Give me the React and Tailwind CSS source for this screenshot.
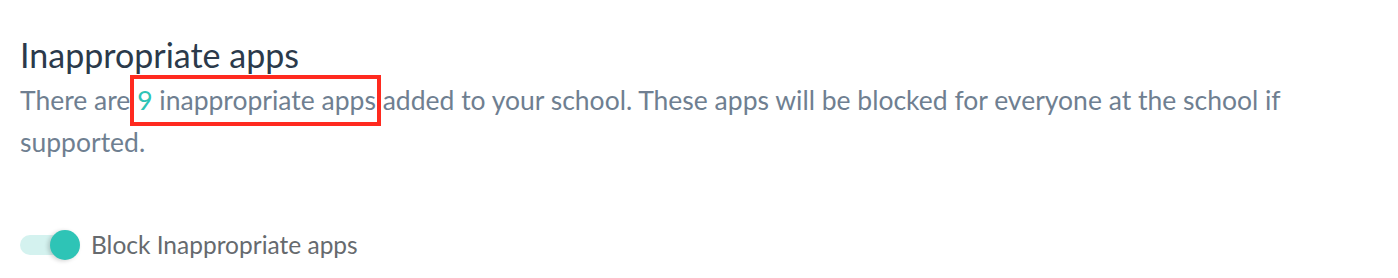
import React from "react";

export default function App() {
  return (
    <div
      className="w-full h-[278px] bg-white px-5 pt-[33px]"
      style={{ fontFamily: "Lato, 'Noto Sans', sans-serif" }}
    >
      <h2 className="text-[34px] leading-[44px] text-[#2b3a4b] font-normal">
        Inappropriate apps
      </h2>
      <p className="mt-[2px] text-[26.5px] leading-[42px] text-[#6f7f91] pr-[80px]">
        There are{" "}
        <span className="relative">
          <span className="text-[#2ec4b6]">9</span> inappropriate apps
          <span className="absolute -left-[7px] -right-[5px] -top-[9px] -bottom-[10px] border-[4px] border-[#ff2a1f] pointer-events-none"></span>
        </span>{" "}
        added to your school. These apps will be blocked for everyone at the
        school if supported.
      </p>
      <div className="mt-[64px] flex items-center gap-[11px]">
        <button className="relative w-[60px] h-[30px] flex items-center">
          <span className="absolute left-0 right-[4px] h-[20px] rounded-full bg-[#d4f2ef]"></span>
          <span className="absolute right-0 w-[30px] h-[30px] rounded-full bg-[#2ec4b6] shadow-[-2px_1px_4px_rgba(0,0,0,0.18)]"></span>
        </button>
        <span className="text-[24.5px] text-[#666a6e]">Block Inappropriate apps</span>
      </div>
    </div>
  );
}
